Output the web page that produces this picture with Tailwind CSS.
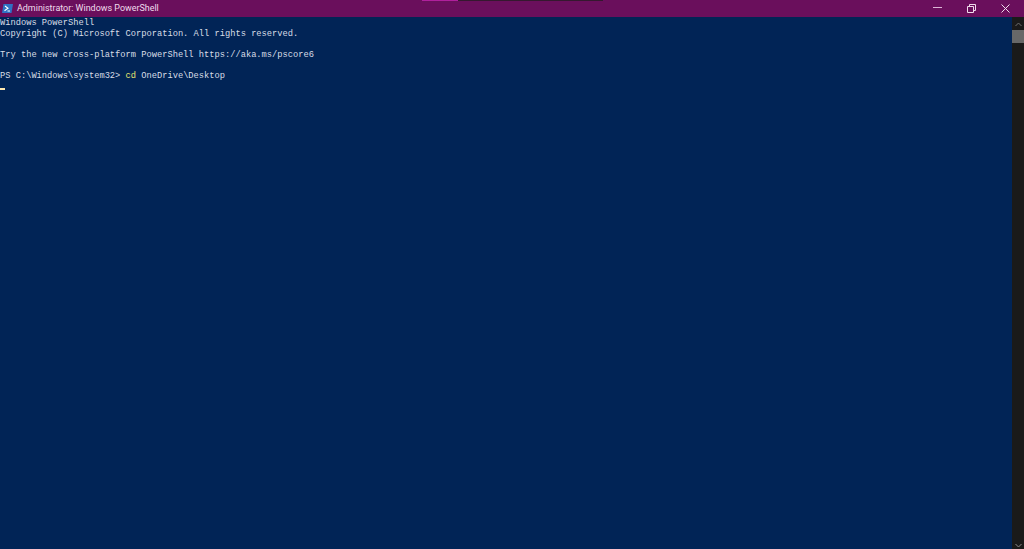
<!DOCTYPE html>
<html>

<head>
  <title>Administrator: Windows PowerShell</title>
  <meta charset="UTF-8" />
  <script src="https://cdn.jsdelivr.net/npm/@tailwindcss/browser@4"></script>
</head>

<body class="h-[549px] w-[1024px] overflow-hidden bg-[#012456] flex flex-col">
  <!-- title bar -->
  <header class="relative h-[17px] shrink-0 flex items-center bg-[#6a0f5c] text-[#f0dcec]">
    <svg class="ml-[2px] w-[11px] h-[11px] shrink-0" viewBox="0 0 11 11" xmlns="http://www.w3.org/2000/svg">
      <path d="M1.5 1H11L9.5 10H0Z" fill="#2f72c4" />
      <path d="M3 3L6 5.2L2.5 7.8" fill="none" stroke="#ffffff" stroke-width="1.1" />
      <path d="M5.5 8H8" stroke="#ffffff" stroke-width="1" />
    </svg>
    <span class="ml-[4px] text-[8.95px] font-['Roboto',sans-serif] whitespace-nowrap">Administrator: Windows PowerShell</span>
    <!-- the strip along the top edge -->
    <div class="absolute top-0 left-[422px] flex h-px w-[181px]">
      <div class="w-[36px] bg-[#b0209c]"></div>
      <div class="flex-1 bg-[#35182f]"></div>
    </div>
    <div class="ml-auto mr-[2px] flex items-center">
      <div class="w-[34px] h-[17px] flex items-center justify-center">
        <svg class="w-[9px] h-[9px]" viewBox="0 0 9 9"><path d="M0 3.5H9" stroke="#dcb4d6" stroke-width="1" /></svg>
      </div>
      <div class="w-[34px] h-[17px] flex items-center justify-center">
        <svg class="w-[9px] h-[9px]" viewBox="0 0 9 9" fill="none" stroke="#f0dcec" stroke-width="1"><path d="M0.5 2.5H6.5V8.5H0.5Z" /><path d="M2.5 2.5V0.5H8.5V6.5H6.5" /></svg>
      </div>
      <div class="w-[34px] h-[17px] flex items-center justify-center">
        <svg class="w-[9px] h-[9px]" viewBox="0 0 9 9" fill="none" stroke="#f0dcec" stroke-width="1"><path d="M0.5 0.5L8.5 8.5M8.5 0.5L0.5 8.5" /></svg>
      </div>
    </div>
  </header>

  <div class="flex flex-1 min-h-0">
    <!-- console output -->
    <main class="flex-1 pt-[1px] font-['Liberation_Mono',monospace] text-[8.72px] leading-[10.5px] text-[#d8dde6] whitespace-nowrap">
      <div>Windows PowerShell</div>
      <div>Copyright (C) Microsoft Corporation. All rights reserved.</div>
      <div class="h-[10.5px]"></div>
      <div>Try the new cross-platform PowerShell https://aka.ms/pscore6</div>
      <div class="h-[10.5px]"></div>
      <div>PS C:\Windows\system32&gt; <span class="text-[#e6e66e]">cd</span> OneDrive\Desktop</div>
      <div class="mt-[7px] w-[5px] h-[2px] bg-[#ffe9b0]"></div>
    </main>
    <!-- scrollbar -->
    <aside class="w-[12px] shrink-0 bg-[#1a1a1a] flex flex-col items-center justify-between">
      <div class="w-full flex flex-col items-center">
        <svg class="mt-[5px] w-[7px] h-[5px]" viewBox="0 0 7 5" fill="none" stroke="#6e6e6e" stroke-width="1"><path d="M0.5 4L3.5 1L6.5 4" /></svg>
        <div class="mt-[3px] w-full h-[13px] bg-[#686868]"></div>
      </div>
      <svg class="mb-[1px] w-[7px] h-[5px]" viewBox="0 0 7 5" fill="none" stroke="#8a8a8a" stroke-width="1"><path d="M0.5 1L3.5 4L6.5 1" /></svg>
    </aside>
  </div>
</body>

</html>
